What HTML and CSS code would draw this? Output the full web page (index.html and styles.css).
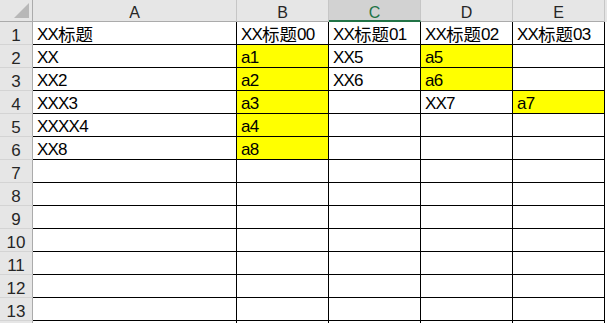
FILE: index.html
```html
<!DOCTYPE html>
<html lang="zh-CN">

<head>
  <meta charset="UTF-8">
  <title>Sheet1</title>
  <link rel="stylesheet" href="styles.css">
</head>

<body>
  <div class="Sheet">
    <div class="Corner">
      <svg class="Corner-icon" viewBox="0 0 15 15"><path d="M15 0V15H0Z" /></svg>
    </div>
    <div class="ColHead">A</div>
    <div class="ColHead">B</div>
    <div class="ColHead is-active">C</div>
    <div class="ColHead">D</div>
    <div class="ColHead">E</div>

    <div class="RowHead">1</div>
    <div class="Cell">XX<span class="Han">标题</span></div>
    <div class="Cell">XX<span class="Han">标题</span>00</div>
    <div class="Cell">XX<span class="Han">标题</span>01</div>
    <div class="Cell">XX<span class="Han">标题</span>02</div>
    <div class="Cell">XX<span class="Han">标题</span>03</div>

    <div class="RowHead">2</div>
    <div class="Cell">XX</div>
    <div class="Cell is-marked">a1</div>
    <div class="Cell">XX5</div>
    <div class="Cell is-marked">a5</div>
    <div class="Cell"></div>

    <div class="RowHead">3</div>
    <div class="Cell">XX2</div>
    <div class="Cell is-marked">a2</div>
    <div class="Cell">XX6</div>
    <div class="Cell is-marked">a6</div>
    <div class="Cell"></div>

    <div class="RowHead">4</div>
    <div class="Cell">XXX3</div>
    <div class="Cell is-marked">a3</div>
    <div class="Cell"></div>
    <div class="Cell">XX7</div>
    <div class="Cell is-marked">a7</div>

    <div class="RowHead">5</div>
    <div class="Cell">XXXX4</div>
    <div class="Cell is-marked">a4</div>
    <div class="Cell"></div>
    <div class="Cell"></div>
    <div class="Cell"></div>

    <div class="RowHead">6</div>
    <div class="Cell">XX8</div>
    <div class="Cell is-marked">a8</div>
    <div class="Cell"></div>
    <div class="Cell"></div>
    <div class="Cell"></div>

    <div class="RowHead">7</div>
    <div class="Cell"></div><div class="Cell"></div><div class="Cell"></div><div class="Cell"></div><div class="Cell"></div>
    <div class="RowHead">8</div>
    <div class="Cell"></div><div class="Cell"></div><div class="Cell"></div><div class="Cell"></div><div class="Cell"></div>
    <div class="RowHead">9</div>
    <div class="Cell"></div><div class="Cell"></div><div class="Cell"></div><div class="Cell"></div><div class="Cell"></div>
    <div class="RowHead">10</div>
    <div class="Cell"></div><div class="Cell"></div><div class="Cell"></div><div class="Cell"></div><div class="Cell"></div>
    <div class="RowHead">11</div>
    <div class="Cell"></div><div class="Cell"></div><div class="Cell"></div><div class="Cell"></div><div class="Cell"></div>
    <div class="RowHead">12</div>
    <div class="Cell"></div><div class="Cell"></div><div class="Cell"></div><div class="Cell"></div><div class="Cell"></div>
    <div class="RowHead">13</div>
    <div class="Cell"></div><div class="Cell"></div><div class="Cell"></div><div class="Cell"></div><div class="Cell"></div>
    <!-- next row only peeks in at the bottom edge -->
    <div class="RowHead"></div>
    <div class="Cell is-blank"></div><div class="Cell is-blank"></div><div class="Cell is-blank"></div><div class="Cell is-blank"></div><div class="Cell is-blank"></div>
  </div>
</body>

</html>
```

FILE: styles.css
```css
body {
  margin: 0;
  background: #fff;
  color: #000;
  font-family: "Liberation Sans", "Noto Sans CJK SC", sans-serif;
  font-size: 17px;
  overflow: hidden;
}

* {
  box-sizing: border-box;
}

.Sheet {
  display: grid;
  grid-template-columns: 33px 204px repeat(4, 92px);
  grid-template-rows: 22px;
  grid-auto-rows: 23px;
  /* header strip runs past the last column */
  background: linear-gradient(#e6e6e6 0 22px, #fff 22px);
}

.Corner {
  background: #e6e6e6;
  border-right: 1px solid #ababab;
  border-bottom: 1px solid #ababab;
  display: flex;
  justify-content: flex-end;
  align-items: flex-end;
  padding: 0 3px 3px 0;
}

.Corner-icon {
  display: block;
  width: 15px;
  height: 15px;
  fill: #b8b8b8;
}

.ColHead {
  background: #e6e6e6;
  border-right: 1px solid #c6c6c6;
  border-bottom: 1px solid #ababab;
  color: #262626;
  font-size: 16px;
  line-height: 14px;
  display: flex;
  justify-content: center;
  align-items: flex-end;
  padding-bottom: 1px;
}

.ColHead.is-active {
  background: #d2d2d2;
  color: #217346;
  border-bottom: 2px solid #217346;
  padding-bottom: 0;
}

.RowHead {
  background: #e6e6e6;
  border-right: 1px solid #ababab;
  border-bottom: 1px solid #d4d4d4;
  color: #262626;
  line-height: 14px;
  display: flex;
  justify-content: center;
  align-items: flex-end;
  padding-bottom: 1px;
}

.Cell {
  background: #fff;
  border-right: 1px solid #000;
  border-bottom: 1px solid #000;
  line-height: 14px;
  letter-spacing: -0.8px;
  display: flex;
  align-items: flex-end;
  padding: 0 0 2px 4px;
  white-space: nowrap;
  overflow: hidden;
}

.Cell.is-marked {
  background: #ffff00;
}

.Cell.is-blank {
  border-bottom: 0;
}

.Han {
  font-size: 17.5px;
  letter-spacing: 0;
}
```
